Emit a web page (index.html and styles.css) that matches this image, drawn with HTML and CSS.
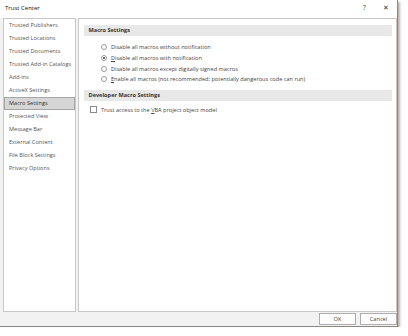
FILE: index.html
```html
<!DOCTYPE html>
<html lang="en">
<head>
    <meta charset="UTF-8">
    <title>Trust Center</title>
    <link rel="stylesheet" href="styles.css">
</head>
<body>

    <div class="dialog">
        <div class="titlebar">
            <span class="title">Trust Center</span>
            <span class="title-btn">?</span>
            <span class="title-btn close">&#x2715;</span>
        </div>

        <div class="main">
            <ul class="nav">
                <li>Trusted Publishers</li>
                <li>Trusted Locations</li>
                <li>Trusted Documents</li>
                <li>Trusted Add-in Catalogs</li>
                <li>Add-ins</li>
                <li>ActiveX Settings</li>
                <li class="selected">Macro Settings</li>
                <li>Protected View</li>
                <li>Message Bar</li>
                <li>External Content</li>
                <li>File Block Settings</li>
                <li>Privacy Options</li>
            </ul>

            <div class="content">
                <div class="section-head">Macro Settings</div>
                <div class="options">
                    <label class="option"><span class="radio"></span><span>Disable all macros without notification</span></label>
                    <label class="option"><span class="radio checked"></span><span><u>D</u>isable all macros with notification</span></label>
                    <label class="option"><span class="radio"></span><span>Disable all macros except digitally signed macros</span></label>
                    <label class="option"><span class="radio"></span><span><u>E</u>nable all macros (not recommended; potentially dangerous code can run)</span></label>
                </div>

                <div class="section-head">Developer Macro Settings</div>
                <label class="check-row"><span class="checkbox"></span><span>Trust access to the <u>V</u>BA project object model</span></label>
            </div>
        </div>

        <div class="footer">
            <button class="btn">OK</button>
            <button class="btn">Cancel</button>
        </div>
    </div>

</body>
</html>
```

FILE: styles.css
```css
body {
    margin: 0;
    background: #fff;
    font-family: "Open Sans", "Noto Sans", sans-serif;
    font-size: 5.6px;
    color: #444;
}
.dialog {
    width: 397px;
    height: 326px;
    background: #f2f2f2;
    border-right: 1px solid #8d8580;
    border-bottom: 1px solid #8d8580;
    box-shadow: 2px 2px 2px rgba(150, 125, 110, 0.6);
    display: flex;
    flex-direction: column;
}
.titlebar {
    height: 18px;
    background: #fff;
    display: flex;
    align-items: center;
    padding: 0 0 3px 5px;
    box-sizing: border-box;
}
.title {
    flex: 1;
    font-size: 6px;
    font-weight: 400;
    color: #111;
}
.title-btn {
    width: 21px;
    text-align: center;
    font-size: 6.5px;
    color: #333;
}
.title-btn.close {
    margin-right: 1px;
    font-size: 6.5px;
}
.main {
    display: flex;
    gap: 2px;
    padding-left: 3px;
    height: 294px;
}
.nav {
    list-style: none;
    margin: 0;
    padding: 0;
    width: 73px;
    background: #fff;
    border: 1px solid #c8c8c8;
}
.nav li {
    height: 13px;
    line-height: 13px;
    padding-left: 5px;
    color: #555;
    white-space: nowrap;
}
.nav li.selected {
    background: #d6d6d6;
    border: 1px solid #a6a6a6;
    line-height: 11px;
    height: 11px;
    padding-left: 4px;
    color: #333;
}
.content {
    width: 314px;
    background: #fff;
    border: 1px solid #c8c8c8;
    padding: 6px 4px 0 5px;
}
.section-head {
    height: 11px;
    line-height: 11px;
    background: #e8e8e8;
    padding-left: 4px;
    font-weight: 700;
    color: #333;
}
.options {
    padding: 6px 0 5px 17px;
}
.option {
    display: flex;
    align-items: center;
    height: 10.7px;
    white-space: nowrap;
}
.radio {
    width: 4px;
    height: 4px;
    border: 1px solid #9a9a9a;
    border-radius: 50%;
    margin-right: 3.5px;
    display: flex;
    align-items: center;
    justify-content: center;
}
.radio.checked::after {
    content: "";
    width: 2px;
    height: 2px;
    border-radius: 50%;
    background: #333;
}
.check-row {
    display: flex;
    align-items: center;
    padding: 4px 0 0 6px;
    height: 10px;
}
.checkbox {
    width: 5px;
    height: 5px;
    border: 1px solid #8a8a8a;
    margin-right: 3.5px;
}
u {
    text-decoration-thickness: 0.5px;
}
.footer {
    flex: 1;
    display: flex;
    justify-content: flex-end;
    align-items: flex-start;
    gap: 4px;
    padding: 1px 0 0 0;
}
.btn {
    width: 37px;
    height: 12px;
    padding: 0;
    font-family: inherit;
    font-size: 5.6px;
    color: #444;
    background: #fdfdfd;
    border: 1px solid #adadad;
}
```
